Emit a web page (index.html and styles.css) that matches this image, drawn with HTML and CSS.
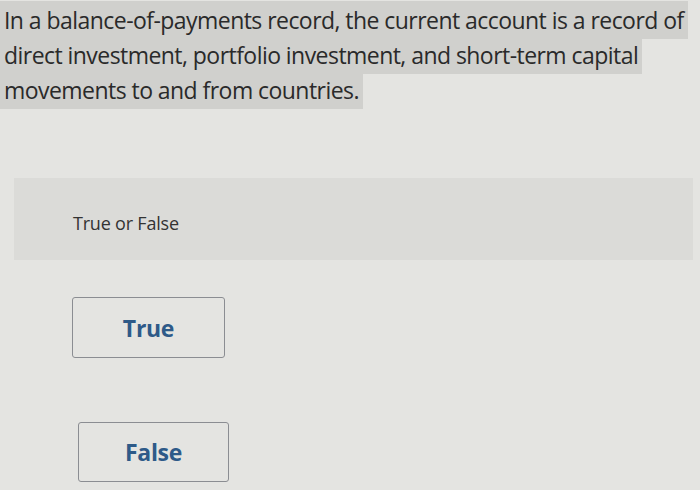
FILE: index.html
```html
<!DOCTYPE html>
<html lang="en">
<head>
    <meta charset="UTF-8">
    <meta name="viewport" content="width=device-width, initial-scale=1.0">
    <title>True or False</title>
    <link rel="stylesheet" href="styles.css">
</head>
<body>
    <div class="question">
        <p class="prompt"><span class="mark">In a balance-of-payments record, the current account is a record of<br>direct investment, portfolio investment, and short-term capital <br>movements to and from countries.</span></p>
    </div>

    <div class="kind">True or False</div>

    <div class="choices">
        <button class="choice choice-true">True</button>
        <button class="choice choice-false">False</button>
    </div>
</body>
</html>
```

FILE: styles.css
```css
html, body {
    height: 100%;
}

body {
    font-family: 'Open Sans', 'Liberation Sans', sans-serif;
    background: #e4e4e1;
    color: #2a2a2a;
    margin: 0;
    padding: 0;
    overflow: hidden;
}

.question {
    padding: 3px 0 0 0;
    height: 175px;
    white-space: nowrap;
}

.prompt {
    margin: 0;
    font-size: 23px;
    line-height: 35px;
    letter-spacing: -0.55px;
}

.mark {
    background: #d0d0cd;
    padding: 3px 4px 3px 4px;
    -webkit-box-decoration-break: clone;
    box-decoration-break: clone;
}

.kind {
    margin: 0 7px 0 14px;
    height: 82px;
    box-sizing: border-box;
    padding: 8px 0 0 59px;
    background: #dbdbd8;
    display: flex;
    align-items: center;
    font-size: 18px;
    letter-spacing: -0.2px;
    color: #333;
}

.choices {
    display: flex;
    flex-direction: column;
    align-items: flex-start;
    gap: 64px;
    padding: 37px 0 0 72px;
}

.choice {
    width: 153px;
    height: 61px;
    background: transparent;
    border: 1.5px solid #8b8d92;
    border-radius: 3px;
    font-family: 'Open Sans', 'Liberation Sans', sans-serif;
    font-size: 23px;
    font-weight: bold;
    letter-spacing: -0.3px;
    color: #2e5a88;
    cursor: pointer;
}

.choice-false {
    margin-left: 6px;
    width: 151px;
    height: 60px;
}
```
